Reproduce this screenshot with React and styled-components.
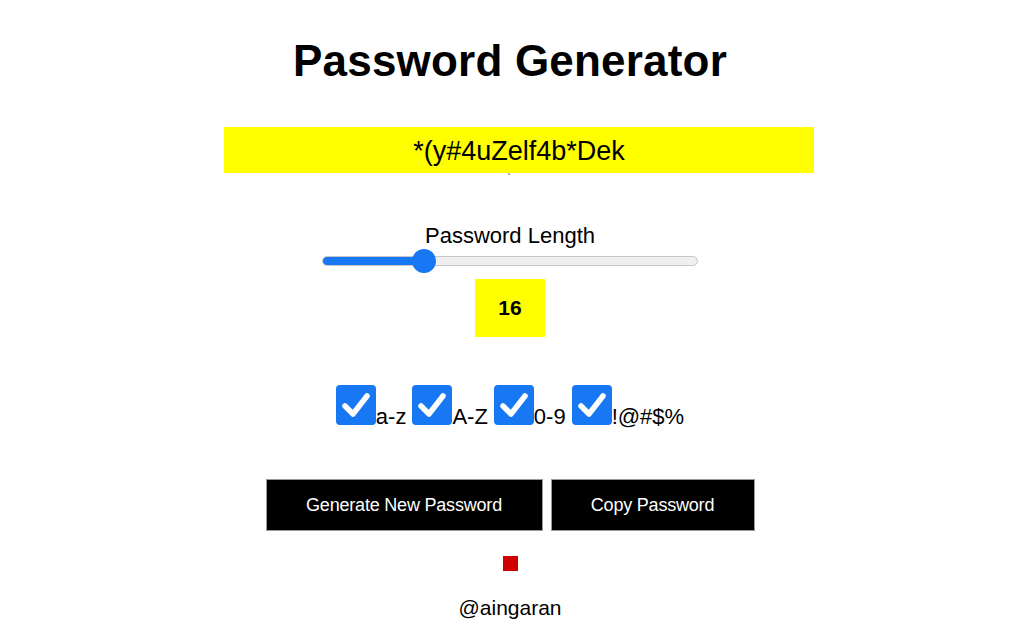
import React, { useState } from "react";
import styled, { createGlobalStyle } from "styled-components";

const GlobalStyle = createGlobalStyle`
  html, body {
    margin: 0;
    padding: 0;
    background: #ffffff;
    font-family: "Liberation Sans", Arial, sans-serif;
    color: #000;
  }
`;

const Page = styled.div`
  width: 1020px;
  height: 638px;
  display: flex;
  flex-direction: column;
  align-items: center;
  box-sizing: border-box;
  padding-top: 37px;
`;

const Title = styled.h1`
  margin: 0;
  font-size: 44px;
  line-height: 48px;
  font-weight: 700;
  letter-spacing: 0.2px;
`;

const PasswordBox = styled.div`
  margin-top: 42px;
  margin-left: 18px;
  width: 590px;
  height: 46px;
  background: #ffff00;
  display: flex;
  align-items: center;
  justify-content: center;
  font-size: 27px;
  padding-top: 2px;
  box-sizing: border-box;
`;

const Tick = styled.div`
  height: 14px;
  font-size: 11px;
  line-height: 10px;
  padding-right: 2px;
`;

const Label = styled.div`
  margin-top: 37px;
  font-size: 22px;
  line-height: 24px;
`;

const Range = styled.input`
  -webkit-appearance: none;
  appearance: none;
  margin: 8px 0 0;
  width: 376px;
  height: 10px;
  border-radius: 5px;
  border: 1px solid #c8c8c8;
  box-sizing: border-box;
  outline: none;

  &::-webkit-slider-thumb {
    -webkit-appearance: none;
    width: 24px;
    height: 24px;
    border-radius: 50%;
    background: #1877f2;
    border: none;
  }
`;

const LengthBox = styled.div`
  margin-top: 13px;
  width: 70px;
  height: 58px;
  background: #ffff00;
  display: flex;
  align-items: center;
  justify-content: center;
  font-size: 21px;
  font-weight: 700;
`;

const Options = styled.div`
  margin-top: 48px;
  display: flex;
  align-items: flex-end;
  gap: 6px;
`;

const Option = styled.label`
  display: flex;
  align-items: flex-end;
  font-size: 22px;
  line-height: 19px;
  cursor: pointer;
`;

const Box = styled.span`
  width: 40px;
  height: 40px;
  border-radius: 4px;
  background: #1877f2;
  display: flex;
  align-items: center;
  justify-content: center;
  margin-bottom: 1px;
`;

const Buttons = styled.div`
  margin-top: 53px;
  display: flex;
  gap: 8px;
`;

const Button = styled.button`
  width: ${(p) => p.$w}px;
  height: 52px;
  background: #000;
  color: #fff;
  border: 1px solid #9a9a9a;
  font-family: "Liberation Sans", Arial, sans-serif;
  font-size: 18px;
  letter-spacing: -0.2px;
  cursor: pointer;
`;

const Status = styled.div`
  margin-top: 25px;
  width: 15px;
  height: 15px;
  background: #d00000;
`;

const Credit = styled.div`
  margin-top: 25px;
  font-size: 21px;
  line-height: 24px;
`;

const Check = () => (
  <svg width="32" height="32" viewBox="0 0 32 32">
    <path
      d="M5 17 L13 25 L27 7"
      fill="none"
      stroke="#fff"
      strokeWidth="5.5"
      strokeLinecap="round"
      strokeLinejoin="round"
    />
  </svg>
);

const options = ["a-z", "A-Z", "0-9", "!@#$%"];

const MIN = 1;
const MAX = 60;

export default function App() {
  const [length, setLength] = useState(16);
  const frac = (length - MIN) / (MAX - MIN);
  const fill = ((12 + frac * (376 - 24)) / 376) * 100;
  return (
    <Page>
      <GlobalStyle />
      <Title>Password Generator</Title>
      <PasswordBox>*(y#4uZelf4b*Dek</PasswordBox>
      <Tick>`</Tick>
      <Label>Password Length</Label>
      <Range
        type="range"
        min={MIN}
        max={MAX}
        value={length}
        onChange={(e) => setLength(Number(e.target.value))}
        style={{
          background: `linear-gradient(to right, #1877f2 0%, #1877f2 ${fill}%, #efefef ${fill}%, #efefef 100%)`,
        }}
      />
      <LengthBox>{length}</LengthBox>
      <Options>
        {options.map((o) => (
          <Option key={o}>
            <Box>
              <Check />
            </Box>
            {o}
          </Option>
        ))}
      </Options>
      <Buttons>
        <Button $w={277}>Generate New Password</Button>
        <Button $w={204}>Copy Password</Button>
      </Buttons>
      <Status />
      <Credit>@aingaran</Credit>
    </Page>
  );
}
